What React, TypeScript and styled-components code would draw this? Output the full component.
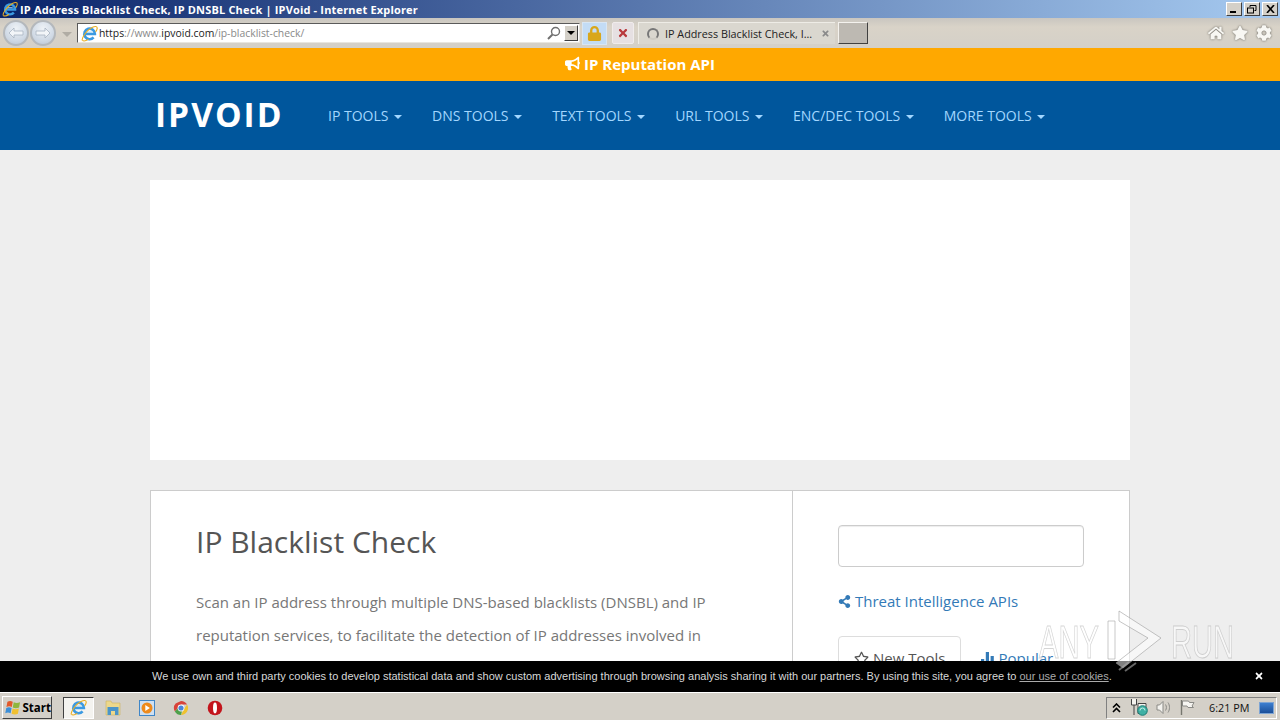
import * as React from "react";
import styled, { createGlobalStyle } from "styled-components";
import { FaBullhorn, FaShareAlt, FaRegStar, FaHome, FaStar, FaCog, FaLock, FaTimes } from "react-icons/fa";

const GlobalStyle = createGlobalStyle`
  html, body {
    margin: 0;
    padding: 0;
    height: 720px;
    overflow: hidden;
    background: #d4d0c8;
  }
  * {
    box-sizing: border-box;
  }
`;

const Screen = styled.div`
  display: flex;
  flex-direction: column;
  width: 1280px;
  height: 720px;
  overflow: hidden;
`;

const TitleBar = styled.div`
  display: flex;
  align-items: center;
  justify-content: space-between;
  flex: 0 0 18px;
  padding: 0 2px;
  background: linear-gradient(90deg, #0a246a 0%, #a6caf0 100%);
`;

const TitleLeft = styled.div`
  display: flex;
  align-items: center;
  gap: 2px;
`;

const TitleText = styled.span`
  font: bold 11px "Open Sans", sans-serif;
  letter-spacing: 0.17px;
  color: #fff;
  white-space: nowrap;
`;

const WindowButtons = styled.div`
  display: flex;
  gap: 2px;
`;

const WindowButton = styled.div`
  display: flex;
  align-items: center;
  justify-content: center;
  width: 16px;
  height: 14px;
  background: #d4d0c8;
  border: 1px solid;
  border-color: #fff #404040 #404040 #fff;
`;

const Toolbar = styled.div`
  display: flex;
  align-items: center;
  flex: 0 0 30px;
  padding: 0 6px 0 3px;
  background: linear-gradient(180deg, #c9c6c0 0%, #d9d3c8 30%, #d4d0c8 100%);
`;

const NavCircle = styled.div`
  display: flex;
  align-items: center;
  justify-content: center;
  width: 26px;
  height: 26px;
  margin-right: 1px;
  border-radius: 50%;
  border: 2px solid #b4b8bc;
  background: radial-gradient(circle at 50% 30%, #eef2f6 0%, #ced8e4 65%, #b5c2d2 100%);
`;

const HistoryCaret = styled.div`
  width: 0;
  height: 0;
  margin: 2px 5px 0 5px;
  border-left: 5px solid transparent;
  border-right: 5px solid transparent;
  border-top: 5px solid #b0aca4;
`;

const AddressBar = styled.div`
  display: flex;
  align-items: center;
  width: 503px;
  height: 20px;
  padding: 0 1px 0 3px;
  background: #fff;
  border: 1px solid;
  border-color: #5a5a5a #e8e6e0 #e8e6e0 #5a5a5a;
`;

const Url = styled.div`
  flex: 1;
  margin-left: 1px;
  font: 10.4px "Open Sans", sans-serif;
  color: #8a8a8a;
  white-space: nowrap;
`;

const UrlStrong = styled.span`
  color: #222;
`;

const UrlDropdown = styled.div`
  display: flex;
  align-items: center;
  justify-content: center;
  width: 14px;
  height: 16px;
  margin-left: 3px;
  background: #d4d0c8;
  border: 1px solid;
  border-color: #fff #404040 #404040 #fff;

  &::after {
    content: "";
    border-left: 4px solid transparent;
    border-right: 4px solid transparent;
    border-top: 4px solid #000;
  }
`;

const LockButton = styled.div`
  display: flex;
  align-items: center;
  justify-content: center;
  width: 25px;
  height: 23px;
  margin-left: 2px;
  background: #c3dcf5;
  border: 1px solid #d8e6f4;
  color: #d9a71a;
`;

const StopButton = styled.div`
  display: flex;
  align-items: center;
  justify-content: center;
  width: 22px;
  height: 22px;
  margin-left: 5px;
  background: #e6e0e2;
  border: 1px solid #f0ecec;
  border-radius: 2px;
  color: #b8383c;
`;

const Tab = styled.div`
  display: flex;
  align-items: center;
  width: 197px;
  height: 22px;
  margin-left: 4px;
  padding: 0 5px 0 8px;
  background: #dad7cf;
  border-top: 1px solid #eeece6;
  border-left: 1px solid #eeece6;
  font: 10.8px "Open Sans", sans-serif;
  color: #222;
  white-space: nowrap;
`;

const TabSpinner = styled.div`
  flex: none;
  width: 12px;
  height: 12px;
  margin-right: 6px;
  border-radius: 50%;
  border: 2px solid #777;
  border-bottom-color: #cfccc4;
`;

const TabTitle = styled.span`
  flex: 1;
`;

const NewTab = styled.div`
  width: 30px;
  height: 22px;
  margin-left: 3px;
  background: #bdb9b2;
  border: 1px solid;
  border-color: #f4f2ee #404040 #404040 #f4f2ee;
`;

const ToolIcons = styled.div`
  display: flex;
  align-items: center;
  gap: 8px;
  margin-left: auto;
  margin-right: 2px;
  color: #f8f7f3;
  filter: drop-shadow(0 0 1px #66645e);
`;

const Viewport = styled.div`
  position: relative;
  flex: 1;
  overflow: hidden;
  background: #eee;
`;

const PromoBar = styled.div`
  display: flex;
  align-items: center;
  justify-content: center;
  gap: 4px;
  height: 33px;
  padding-bottom: 2px;
  background: #ffa800;
  color: #fff;
  font: bold 15px "Open Sans", sans-serif;
`;

const SiteNav = styled.nav`
  height: 69px;
  background: #00569c;
`;

const NavInner = styled.div`
  display: flex;
  align-items: center;
  width: 980px;
  height: 100%;
  margin: 0 auto;
`;

const Brand = styled.div`
  width: 163px;
  padding: 0 0 4px 5px;
  font: bold 33.5px "Open Sans", sans-serif;
  letter-spacing: 2px;
  color: #fff;
`;

const NavItem = styled.div`
  display: flex;
  align-items: center;
  gap: 5.6px;
  padding: 0 15px;
  font: 14px "Open Sans", sans-serif;
  color: #a3d7ff;
  white-space: nowrap;
`;

const Caret = styled.span`
  width: 0;
  height: 0;
  margin-top: 3px;
  border-left: 4px solid transparent;
  border-right: 4px solid transparent;
  border-top: 4px solid #a3d7ff;
`;

const AdSlot = styled.div`
  width: 980px;
  height: 280px;
  margin: 30px auto;
  background: #fff;
`;

const Card = styled.div`
  display: grid;
  grid-template-columns: 642px 1fr;
  width: 980px;
  margin: 0 auto;
  background: #fff;
  border: 1px solid #ccc;
`;

const MainCol = styled.div`
  padding: 28px 45px 0;
  border-right: 1px solid #ccc;
`;

const Heading = styled.h1`
  margin: 0 0 21px;
  font: 400 30px/46px "Open Sans", sans-serif;
  color: #555;
`;

const Intro = styled.p`
  margin: 0;
  font: 400 15px/33px "Open Sans", sans-serif;
  color: #777;
`;

const SideCol = styled.div`
  padding: 34px 45px 0;
`;

const SearchInput = styled.div`
  width: 246px;
  height: 42px;
  background: #fff;
  border: 1px solid #ccc;
  border-radius: 4px;
  box-shadow: inset 0 1px 1px rgba(0, 0, 0, 0.075);
`;

const SideLink = styled.div`
  display: flex;
  align-items: center;
  gap: 4px;
  margin-top: 23px;
  font: 400 15px/23px "Open Sans", sans-serif;
  color: #337ab7;
`;

const TabRow = styled.div`
  display: flex;
  align-items: flex-start;
  margin-top: 23px;
`;

const ToolTab = styled.div<{ $active?: boolean }>`
  display: flex;
  align-items: center;
  gap: 4px;
  height: 44px;
  margin-right: 4px;
  padding: 10px 15px;
  font: 400 15px/23px "Open Sans", sans-serif;
  color: ${(props) => (props.$active ? "#555" : "#337ab7")};
  background: ${(props) => (props.$active ? "#fff" : "transparent")};
  border: 1px solid ${(props) => (props.$active ? "#ddd" : "transparent")};
  border-radius: 4px 4px 0 0;
`;

const CookieBar = styled.div`
  position: absolute;
  left: 0;
  right: 0;
  bottom: 0;
  display: flex;
  align-items: center;
  height: 31px;
  padding: 0 16px 2px 152px;
  background: #000;
  color: #d8d8d8;
  font: 11px "Liberation Sans", Arial, sans-serif;
  white-space: nowrap;
`;

const CookieLink = styled.span`
  text-decoration: underline;
  color: #aaa;
`;

const CookieClose = styled.span`
  display: flex;
  margin-left: auto;
  color: #fff;
`;

const Watermark = styled.div`
  position: absolute;
  left: 1039px;
  top: 562px;
  display: flex;
  align-items: center;
  gap: 8px;
  height: 62px;
  pointer-events: none;
`;

const WatermarkWord = styled.div`
  width: 60px;
  font: 400 47px "Liberation Sans", Arial, sans-serif;
  color: rgba(255, 255, 255, 0.5);
  -webkit-text-stroke: 1px rgba(150, 150, 150, 0.4);
  transform: scaleX(0.62);
  transform-origin: left center;
  white-space: nowrap;
`;

const Taskbar = styled.div`
  display: flex;
  align-items: center;
  flex: 0 0 28px;
  padding: 2px 3px 0 2px;
  background: #d4d0c8;
  border-top: 1px solid #fff;
`;

const StartButton = styled.div`
  display: flex;
  align-items: center;
  gap: 1px;
  width: 50px;
  height: 23px;
  padding-left: 2px;
  font: bold 11.5px "Open Sans", sans-serif;
  color: #000;
  background: #d4d0c8;
  border: 1px solid;
  border-color: #fff #404040 #404040 #fff;
`;

const ActiveTask = styled.div`
  display: flex;
  align-items: center;
  justify-content: center;
  width: 31px;
  height: 22px;
  margin-left: 11px;
  background: #f4f3ef;
  border: 1px solid;
  border-color: #404040 #fff #fff #404040;
`;

const QuickIcons = styled.div`
  display: flex;
  margin-left: 2px;
`;

const QuickIcon = styled.div`
  display: flex;
  align-items: center;
  justify-content: center;
  width: 34px;
  height: 22px;
`;

const Tray = styled.div`
  display: flex;
  align-items: center;
  width: 171px;
  height: 22px;
  margin-left: auto;
  padding: 0 2px 0 5px;
  border: 1px solid;
  border-color: #808080 #fff #fff #808080;
  font: 10.8px "Open Sans", sans-serif;
  color: #111;
`;

const TraySlot = styled.div`
  display: flex;
  align-items: center;
  justify-content: center;
  width: 24px;
`;

const Clock = styled.div`
  margin-left: 10px;
  white-space: nowrap;
`;

const ShowDesktop = styled.div`
  width: 15px;
  height: 12px;
  margin-left: auto;
  background: linear-gradient(180deg, #3d7fd0, #1c4f98);
  border: 1px solid #7da4d4;
`;

const IeLogo = ({ size = 17 }: { size?: number }) => (
  <svg width={size} height={size} viewBox="0 0 17 17">
    <path d="M4.600 9h9.300a5.300 5.300 0 1 0-1.300 3.400" fill="none" stroke="#3b9ae2" strokeWidth="2.600" />
    <path d="M5 7.100h6.400" stroke="#9ed2f6" strokeWidth="1" />
    <path d="M1.400 15.400C.2 13.400 5.600 5.400 11 2.600c3-1.600 5.400-1.600 5.200.8-.1 1.200-.9 2.600-1.600 3.600" fill="none" stroke="#e9ae22" strokeWidth="1.100" />
    <path d="M1.400 15.400c1.300 1 4 .2 6-1" fill="none" stroke="#e9ae22" strokeWidth="1.100" />
  </svg>
);

const ArrowIcon = ({ flip }: { flip?: boolean }) => (
  <svg width="16" height="12" viewBox="0 0 16 12" style={{ transform: flip ? "scaleX(-1)" : undefined }}>
    <path d="M6 1L1 6l5 5V8h9V4H6z" fill="#f2f5f8" stroke="#a8b4c2" strokeWidth=".8" />
  </svg>
);

const SearchGlass = () => (
  <svg width="14" height="14" viewBox="0 0 14 14" fill="none" stroke="#6f6f6f">
    <circle cx="8.500" cy="5.500" r="4" strokeWidth="1.400" />
    <path d="M5.500 8.500L1 13" strokeWidth="2" />
  </svg>
);

const WinFlag = () => (
  <svg width="17" height="15" viewBox="0 0 17 15">
    <path d="M2.500 1.500c2-1 3.500-1 5.500 0L7 7C5 6 3.500 6 1.500 7z" fill="#e2592a" />
    <path d="M9 2c2 1 4 1 6.500 0l-1 5.500c-2 1-4.500 1-6.500 0z" fill="#8fb63c" />
    <path d="M1.300 8c2-1 3.500-1 5.500 0l-1 5.500c-2-1-3.500-1-5.500 0z" fill="#3c8fd8" />
    <path d="M7.800 8.500c2 1 4.500 1 6.500 0l-1 5.500c-2 1-4.500 1-6.500 0z" fill="#f0c030" />
  </svg>
);

const FolderIcon = () => (
  <svg width="16" height="17" viewBox="0 0 16 17">
    <path d="M1 2h5l1 2h8v12H1z" fill="#ecd88c" stroke="#cdb45e" strokeWidth=".6" />
    <path d="M2.500 8h11v8H10v-4H6v4H2.500z" fill="#4b95c9" />
  </svg>
);

const MediaIcon = () => (
  <svg width="16" height="16" viewBox="0 0 16 16">
    <rect x=".5" y=".5" width="15" height="15" fill="#cfe0f2" stroke="#3f86c8" />
    <circle cx="8" cy="8" r="5.500" fill="#ee8a1c" />
    <path d="M6.300 5l4.600 3-4.600 3z" fill="#fff" />
  </svg>
);

const ChromeIcon = () => (
  <svg width="16" height="16" viewBox="0 0 16 16">
    <path d="M8 1a7 7 0 0 1 6.100 3.500H8z" fill="#d8433a" />
    <path d="M1.900 11.500A7 7 0 0 1 2.600 3.500L8 1v3.500z" fill="#d8433a" />
    <path d="M14.100 4.500A7 7 0 0 1 8 15l3-6z" fill="#efc22f" />
    <path d="M8 15a7 7 0 0 1-6.100-3.500L5 8l4 3z" fill="#4ea04a" />
    <circle cx="8" cy="8" r="3.400" fill="#fff" />
    <circle cx="8" cy="8" r="2.600" fill="#4b84d8" />
  </svg>
);

const OperaIcon = () => (
  <svg width="16" height="16" viewBox="0 0 16 16">
    <circle cx="8" cy="8" r="7.300" fill="#c3141c" />
    <ellipse cx="8" cy="8" rx="2" ry="5.400" fill="#fff" />
  </svg>
);

const ChevronsIcon = () => (
  <svg width="9" height="10" viewBox="0 0 9 10" fill="none" stroke="#000" strokeWidth="1.600">
    <path d="M1 4.500L4.500 1 8 4.500M1 9l3.500-3.500L8 9" />
  </svg>
);

const NetworkIcon = () => (
  <svg width="19" height="19" viewBox="0 0 19 19">
    <path d="M1.500 1v6h5V1M4 7v10M8 5.500h8v10H8z" fill="#f4f3ef" stroke="#444" />
    <circle cx="12.500" cy="12.500" r="4.800" fill="#3fb0a4" stroke="#1f7d75" />
    <path d="M10 12.500a2.500 2.500 0 0 1 5 0" fill="none" stroke="#c8efe9" />
  </svg>
);

const SpeakerIcon = () => (
  <svg width="17" height="17" viewBox="0 0 17 17" fill="none">
    <path d="M2 6h2.500L8 2.500v12L4.500 11H2z" fill="#f4f3ef" stroke="#8a8a86" />
    <path d="M10.500 5.500c1.200 1.800 1.200 4.200 0 6M13 3.500c2 3 2 7 0 10" stroke="#8a8a86" />
  </svg>
);

const FlagIcon = () => (
  <svg width="16" height="17" viewBox="0 0 16 17" fill="none">
    <path d="M2.500 1v15" stroke="#77776f" strokeWidth="1.400" />
    <path d="M3.500 2h6l1 1.500H15L13 7l1.500 1.500H9L8 7H3.500z" fill="#f6f5f1" stroke="#8a8a86" />
  </svg>
);

const BarsIcon = () => (
  <svg width="13" height="13" viewBox="0 0 13 13" fill="#337ab7">
    <rect x="0" y="7" width="3.200" height="6" />
    <rect x="4.800" y="0" width="3.200" height="13" />
    <rect x="9.600" y="4" width="3.200" height="9" />
  </svg>
);

const PlayMark = () => (
  <svg width="56" height="62" viewBox="0 0 56 62" fill="none">
    <path d="M1 11h7v38H1z" fill="rgba(255,255,255,.45)" stroke="rgba(150,150,150,.5)" />
    <path d="M12 1l42 27-38 30-7-5 32-25L12 11z" fill="rgba(255,255,255,.5)" stroke="rgba(150,150,150,.55)" />
    <path d="M12 60l10-8M18 61l11-8" stroke="rgba(170,170,170,.6)" strokeWidth="2" />
  </svg>
);

const navItems = ["IP TOOLS", "DNS TOOLS", "TEXT TOOLS", "URL TOOLS", "ENC/DEC TOOLS", "MORE TOOLS"];

const App = () => {
  return (
    <Screen>
      <GlobalStyle />
      <TitleBar>
        <TitleLeft>
          <IeLogo size={16} />
          <TitleText>IP Address Blacklist Check, IP DNSBL Check | IPVoid - Internet Explorer</TitleText>
        </TitleLeft>
        <WindowButtons>
          <WindowButton>
            <svg width="8" height="8"><rect x="0" y="6" width="6" height="2" fill="#000" /></svg>
          </WindowButton>
          <WindowButton>
            <svg width="10" height="9" fill="none" stroke="#000">
              <path d="M3 2V.5h6v5H7.500" />
              <rect x=".5" y="3" width="6" height="5" />
            </svg>
          </WindowButton>
          <WindowButton>
            <svg width="9" height="8"><path d="M1 0l7 8M8 0L1 8" stroke="#000" strokeWidth="1.600" /></svg>
          </WindowButton>
        </WindowButtons>
      </TitleBar>
      <Toolbar>
        <NavCircle><ArrowIcon /></NavCircle>
        <NavCircle><ArrowIcon flip /></NavCircle>
        <HistoryCaret />
        <AddressBar>
          <IeLogo />
          <Url>
            <UrlStrong>https</UrlStrong>://www.<UrlStrong>ipvoid.com</UrlStrong>/ip-blacklist-check/
          </Url>
          <SearchGlass />
          <UrlDropdown />
        </AddressBar>
        <LockButton><FaLock size={15} /></LockButton>
        <StopButton><FaTimes size={12} /></StopButton>
        <Tab>
          <TabSpinner />
          <TabTitle>IP Address Blacklist Check, I...</TabTitle>
          <FaTimes size={9} color="#8a8a8a" />
        </Tab>
        <NewTab />
        <ToolIcons>
          <FaHome size={16} />
          <FaStar size={16} />
          <FaCog size={16} />
        </ToolIcons>
      </Toolbar>
      <Viewport>
        <PromoBar>
          <FaBullhorn size={15} />
          IP Reputation API
        </PromoBar>
        <SiteNav>
          <NavInner>
            <Brand>IPVOID</Brand>
            {navItems.map((item) => (
              <NavItem key={item}>
                {item}
                <Caret />
              </NavItem>
            ))}
          </NavInner>
        </SiteNav>
        <AdSlot />
        <Card>
          <MainCol>
            <Heading>IP Blacklist Check</Heading>
            <Intro>
              Scan an IP address through multiple DNS-based blacklists (DNSBL) and IP
              reputation services, to facilitate the detection of IP addresses involved in
            </Intro>
          </MainCol>
          <SideCol>
            <SearchInput />
            <SideLink>
              <FaShareAlt size={13} />
              Threat Intelligence APIs
            </SideLink>
            <TabRow>
              <ToolTab $active>
                <FaRegStar size={15} />
                New Tools
              </ToolTab>
              <ToolTab>
                <BarsIcon />
                Popular
              </ToolTab>
            </TabRow>
          </SideCol>
        </Card>
        <CookieBar>
          We use own and third party cookies to develop statistical data and show custom advertising through browsing analysis sharing it with our partners. By using this site, you agree to&nbsp;
          <CookieLink>our use of cookies</CookieLink>.
          <CookieClose><FaTimes size={10} /></CookieClose>
        </CookieBar>
        <Watermark>
          <WatermarkWord>ANY</WatermarkWord>
          <PlayMark />
          <WatermarkWord>RUN</WatermarkWord>
        </Watermark>
      </Viewport>
      <Taskbar>
        <StartButton>
          <WinFlag />
          Start
        </StartButton>
        <ActiveTask><IeLogo /></ActiveTask>
        <QuickIcons>
          <QuickIcon><FolderIcon /></QuickIcon>
          <QuickIcon><MediaIcon /></QuickIcon>
          <QuickIcon><ChromeIcon /></QuickIcon>
          <QuickIcon><OperaIcon /></QuickIcon>
        </QuickIcons>
        <Tray>
          <ChevronsIcon />
          <TraySlot style={{ marginLeft: 6 }}><NetworkIcon /></TraySlot>
          <TraySlot><SpeakerIcon /></TraySlot>
          <TraySlot><FlagIcon /></TraySlot>
          <Clock>6:21 PM</Clock>
          <ShowDesktop />
        </Tray>
      </Taskbar>
    </Screen>
  );
};

export default App;
